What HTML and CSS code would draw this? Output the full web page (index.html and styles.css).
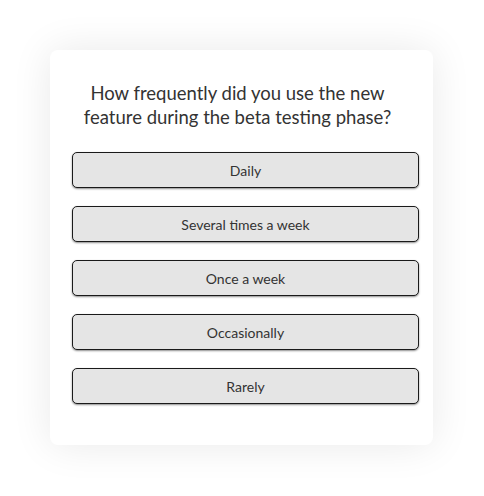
FILE: index.html
```html
<!DOCTYPE html>
<html lang="en">
  <head>
    <meta charset="UTF-8" />
    <meta name="viewport" content="width=device-width, initial-scale=1.0" />
    <title>Beta Survey</title>
    <link rel="stylesheet" href="styles.css">
  </head>
  <body>
    <div class="survey-card">
      <div class="question">
        How frequently did you use the new feature during the beta testing phase?
      </div>
      <div class="options">
        <button class="option">Daily</button>
        <button class="option">Several times a week</button>
        <button class="option">Once a week</button>
        <button class="option">Occasionally</button>
        <button class="option">Rarely</button>
      </div>
    </div>
  </body>
</html>
```

FILE: styles.css
```css
* {
  margin: 0;
  padding: 0;
  box-sizing: border-box;
  font-family: "Lato", "Open Sans", "Liberation Sans", sans-serif;
}

html,
body {
  height: 100%;
  overflow: hidden;
}

body {
  background-color: #fff;
  color: #333;
  padding: 50px 0 0 50px;
}

.survey-card {
  width: 383px;
  height: 395px;
  background-color: #fff;
  border-radius: 8px;
  box-shadow: 0 0 40px rgba(0, 0, 0, 0.09);
  padding: 31px 14px 0 22px;
}

.question {
  font-size: 18.5px;
  line-height: 24px;
  text-align: center;
  color: #333;
  padding: 0 16px 0 0;
  margin-bottom: 23px;
}

.options {
  display: flex;
  flex-direction: column;
  gap: 18px;
}

.option {
  height: 36px;
  background-color: #e5e5e5;
  border: 1px solid #1a1a1a;
  border-radius: 5px;
  box-shadow: 0 1px 2px rgba(0, 0, 0, 0.45);
  font-size: 14px;
  color: #333;
  cursor: pointer;
}
```
